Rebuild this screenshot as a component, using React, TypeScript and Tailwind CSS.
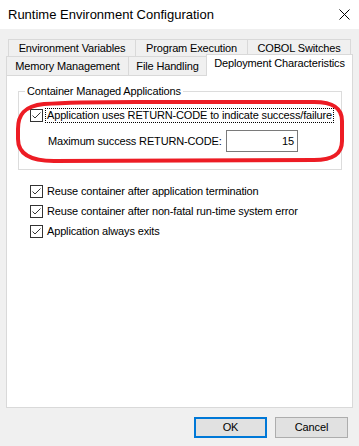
import React from 'react';

const rowOne = [
  { label: 'Environment Variables', w: 'w-[127px]' },
  { label: 'Program Execution', w: 'w-[112px]' },
  { label: 'COBOL Switches', w: 'w-[104px] border-r' },
];

function CheckBox() {
  return (
    <span className="w-[13px] h-[13px] shrink-0 border border-[#333333] bg-white flex items-center justify-center">
      <svg width="11" height="11" viewBox="0 0 11 11">
        <polyline points="1.5,5.5 4,8 9.5,2.5" fill="none" stroke="#333333" strokeWidth="1" />
      </svg>
    </span>
  );
}

function Option({ label }: { label: string }) {
  return (
    <div className="h-[20px] flex items-center">
      <CheckBox />
      <span className="ml-[4px] leading-[13px]">{label}</span>
    </div>
  );
}

export default function App() {
  return (
    <div className="relative w-[359px] h-[446px] overflow-hidden bg-[#f0f0f0] flex flex-col font-['Liberation_Sans',Arial,sans-serif] text-[11px] tracking-[-0.15px] text-black">
      {/* title bar */}
      <div className="h-[29px] bg-white flex items-center justify-between pl-[8px] pr-[9px] shrink-0">
        <span className="text-[13px] tracking-normal">Runtime Environment Configuration</span>
        <svg width="11" height="11" viewBox="0 0 11 11">
          <path d="M0.5 0.5 L10.5 10.5 M10.5 0.5 L0.5 10.5" stroke="#000" strokeWidth="1" />
        </svg>
      </div>

      {/* tabs */}
      <div className="mt-[10px] ml-[8px] flex h-[17px]">
        {rowOne.map((t) => (
          <div key={t.label} className={`${t.w} h-full border-t border-l border-[#d9d9d9] flex items-center justify-center leading-[13px]`}>
            {t.label}
          </div>
        ))}
      </div>
      <div className="ml-[6px] flex items-end h-[19px]">
        <div className="w-[122px] h-full border-t border-l border-[#d9d9d9] flex items-center justify-center leading-[13px]">Memory Management</div>
        <div className="w-[78px] h-full border-t border-l border-[#d9d9d9] flex items-center justify-center leading-[13px]">File Handling</div>
        <div className="relative z-10 w-[147px] h-[22px] -mb-px bg-white border-t border-l border-r border-[#d9d9d9] flex items-start justify-center pt-[2px] leading-[13px]">
          Deployment Characteristics
        </div>
      </div>

      {/* page */}
      <div className="mx-[6px] w-[347px] h-[333px] bg-white border border-[#d9d9d9] shrink-0">
        <fieldset className="mt-[9px] ml-[11px] w-[324px] border border-[#dcdcdc] pb-[17px]">
          <legend className="ml-[6px] px-[2px] leading-[13px]">Container Managed Applications</legend>
          <div className="mt-[10px] pl-[11px] h-[15px] flex items-center">
            <CheckBox />
            <span className="ml-[2px] px-[1px] h-[15px] flex items-center border border-dotted border-black leading-[13px]">
              Application uses RETURN-CODE to indicate success/failure
            </span>
          </div>
          <div className="mt-[7px] pl-[29px] flex items-center h-[22px]">
            <span className="w-[178px] leading-[13px]">Maximum success RETURN-CODE:</span>
            <div className="w-[72px] h-[22px] border border-[#7a7a7a] bg-white flex items-center justify-end pr-[3px] leading-[13px]">15</div>
          </div>
        </fieldset>

        <div className="mt-[11px] pl-[23px] flex flex-col">
          <Option label="Reuse container after application termination" />
          <Option label="Reuse container after non-fatal run-time system error" />
          <Option label="Application always exits" />
        </div>
      </div>

      {/* buttons */}
      <div className="mt-[9px] flex justify-end gap-[8px] pr-[11px]">
        <button className="w-[73px] h-[21px] border-2 border-[#0078d7] bg-[#e1e1e1] leading-[13px]">OK</button>
        <button className="w-[73px] h-[21px] border border-[#adadad] bg-[#e1e1e1] leading-[13px]">Cancel</button>
      </div>

      {/* red annotation */}
      <svg className="absolute left-[14px] top-[99px] pointer-events-none" width="332" height="66" viewBox="0 0 332 66">
        <path
          d="M30 5 C70 2 120 3 170 3 L300 3 C318 3 328 8 328 22 L328 42 C328 56 318 61 300 61 L40 62 C18 62 4 56 4 40 L4 30 C4 16 10 7 30 5 Z"
          fill="none"
          stroke="#ed1c24"
          strokeWidth="4"
        />
      </svg>
    </div>
  );
}
